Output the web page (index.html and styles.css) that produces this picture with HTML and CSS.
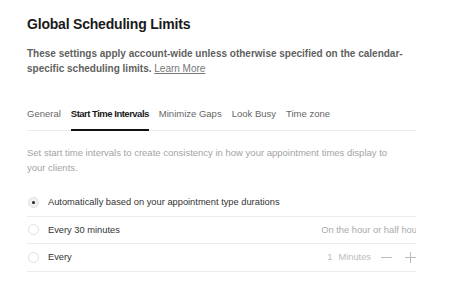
FILE: index.html
```html
<!DOCTYPE html>
<html lang="en">
<head>
    <meta charset="UTF-8">
    <meta name="viewport" content="width=device-width, initial-scale=1.0">
    <title>Global Scheduling Limits</title>
    <link rel="stylesheet" href="styles.css">
</head>
<body>
    <div class="container">
        <h1>Global Scheduling Limits</h1>
        <p class="intro">These settings apply account-wide unless otherwise specified on the calendar-specific scheduling limits. <a href="#">Learn More</a></p>

        <div class="tabs">
            <span class="tab">General</span>
            <span class="tab active">Start Time Intervals</span>
            <span class="tab">Minimize Gaps</span>
            <span class="tab">Look Busy</span>
            <span class="tab">Time zone</span>
        </div>

        <p class="help">Set start time intervals to create consistency in how your appointment times display to your clients.</p>

        <div class="options">
            <div class="option">
                <span class="radio checked"></span>
                <span class="label">Automatically based on your appointment type durations</span>
            </div>
            <div class="option">
                <span class="radio"></span>
                <span class="label">Every 30 minutes</span>
                <span class="note">On the hour or half hour</span>
            </div>
            <div class="option">
                <span class="radio"></span>
                <span class="label">Every</span>
                <span class="stepper">
                    <span class="num">1</span>
                    <span class="unit">Minutes</span>
                    <span class="minus"></span>
                    <span class="plus"></span>
                </span>
            </div>
        </div>
    </div>
</body>
</html>
```

FILE: styles.css
```css
body {
    margin: 0;
    background-color: #ffffff;
    font-family: "Liberation Sans", Arial, sans-serif;
    color: #222;
}

.container {
    width: 389px;
    padding: 15px 0 0 27px;
    overflow: hidden;
}

h1 {
    margin: 0;
    font-size: 14px;
    font-weight: bold;
    color: #1a1a1a;
    line-height: 18px;
    letter-spacing: -0.2px;
}

.intro {
    margin: 13px 0 0;
    width: 385px;
    font-size: 10px;
    line-height: 15px;
    font-weight: bold;
    color: #5f5f5f;
}

.intro a {
    color: #777;
    font-weight: normal;
    text-decoration: underline;
}

.tabs {
    display: flex;
    gap: 10px;
    margin-top: 32px;
    border-bottom: 1px solid #ececec;
}

.tab {
    font-size: 9.5px;
    color: #666;
    padding: 0 0 10px;
    border-bottom: 2px solid transparent;
    margin-bottom: -1px;
}

.tab.active {
    color: #1a1a1a;
    font-weight: bold;
    letter-spacing: -0.5px;
    border-bottom-color: #111;
}

.help {
    margin: 14px 0 0;
    font-size: 9.5px;
    line-height: 15px;
    color: #a3a3a3;
    width: 375px;
}

.options {
    margin-top: 14px;
}

.option {
    display: flex;
    align-items: center;
    width: 393px;
    height: 26.5px;
    border-bottom: 1px solid #ebebeb;
    font-size: 9.3px;
    color: #333;
}

.radio {
    box-sizing: border-box;
    width: 11px;
    height: 11px;
    border: 1px solid #e0e0e0;
    border-radius: 50%;
    margin: 0 9px 0 1px;
    flex-shrink: 0;
    display: flex;
    align-items: center;
    justify-content: center;
}

.radio.checked {
    background-color: #f0f0f0;
}

.radio.checked::after {
    content: "";
    width: 3px;
    height: 3px;
    border-radius: 50%;
    background-color: #222;
}

.label {
    flex: 1;
}

.note {
    color: #aaa;
    white-space: nowrap;
}

.stepper {
    display: flex;
    align-items: center;
    color: #bbb;
    margin-right: 4px;
}

.unit {
    margin-left: 6px;
}

.minus {
    width: 11px;
    height: 1px;
    background-color: #bbb;
    margin-left: 10px;
}

.plus {
    position: relative;
    width: 11px;
    height: 11px;
    margin-left: 13px;
}

.plus::before,
.plus::after {
    content: "";
    position: absolute;
    background-color: #bbb;
}

.plus::before {
    left: 0;
    top: 5px;
    width: 11px;
    height: 1px;
}

.plus::after {
    left: 5px;
    top: 0;
    width: 1px;
    height: 11px;
}
```
